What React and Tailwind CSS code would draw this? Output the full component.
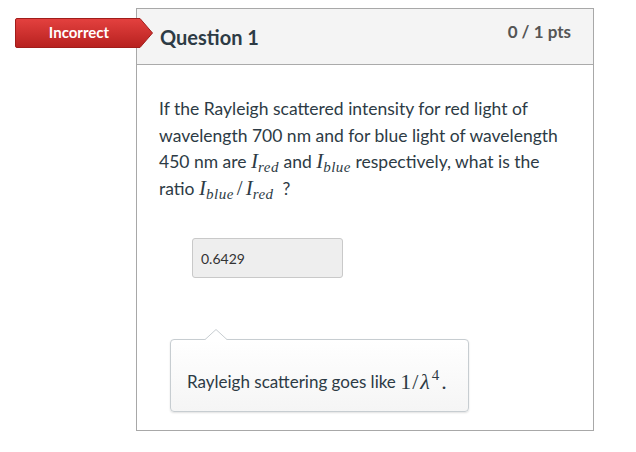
import React from "react";

const mathFont = { fontFamily: '"Liberation Serif", serif' };

function MathI({ sub }) {
  return (
    <span className="whitespace-nowrap leading-none">
      <span className="italic text-[21px] leading-none" style={mathFont}>I</span>
      <span className="italic text-[15px] leading-none relative top-[4px] tracking-[0.5px]" style={mathFont}>{sub}</span>
    </span>
  );
}

export default function App() {
  return (
    <div className="w-[636px] h-[452px] bg-white relative" style={{ fontFamily: 'Lato, "Noto Sans", sans-serif' }}>
      <div className="pl-[136px] pt-[8px]">
        <div className="w-[458px] h-[423px] border border-[#a8a8a8] flex flex-col">
          <div className="h-[56px] bg-[#f4f4f4] border-b border-[#aaaaaa] flex items-center justify-between pl-[23px] pr-[22px]">
            <span className="text-[20px] font-bold text-[#2d3b45]">Question 1</span>
            <span className="text-[17px] font-bold text-[#555555] -mt-[9px]">0 / 1 pts</span>
          </div>
          <div className="pl-[22px] pt-[31px]">
            <p className="w-[412px] text-[17.5px] leading-[26.5px] text-[#2d3b45]">
              If the Rayleigh scattered intensity for red light of wavelength 700 nm and for blue light of wavelength 450 nm are <MathI sub="red" /> and <MathI sub="blue" /> respectively, what is the ratio <MathI sub="blue" /><span className="text-[21px] leading-none mx-[3px]" style={mathFont}>/</span><MathI sub="red" />&nbsp;&nbsp;?
            </p>
            <div className="ml-[33px] mt-[36px] w-[151px] h-[40px] bg-[#eeeeee] border border-[#c9c9c9] rounded-[3px] flex items-center pl-[8px] text-[14px] text-[#333333]">
              0.6429
            </div>
            <div className="relative ml-[11px] mt-[61px] w-[299px] h-[73px] rounded-[4px] border border-[#c7cdd1] bg-gradient-to-b from-white to-[#f5f5f5] shadow-[0_1px_2px_rgba(0,0,0,0.12)] flex items-center pl-[16px] pt-[13px] text-[17px] text-[#2d3b45]">
              <svg className="absolute left-[33px] -top-[11px]" width="24" height="12" viewBox="0 0 24 12">
                <path d="M0 11.5 L12 0.5 L24 11.5" fill="white" stroke="#c7cdd1" strokeWidth="1" />
                <rect x="0" y="11" width="24" height="2" fill="white" />
              </svg>
              <span>Rayleigh scattering goes like&nbsp;</span>
              <span className="text-[22px] leading-none tracking-[1px]" style={mathFont}>1/<span className="italic ml-[1px]">λ</span><span className="text-[15px] relative -top-[9px] ml-[1px]">4</span><span className="ml-[1px]">.</span></span>
            </div>
          </div>
        </div>
      </div>
      <div className="absolute left-[15px] top-[18px] h-[30px] w-[138px]">
        <svg className="absolute inset-0" width="138" height="30" viewBox="0 0 138 30">
          <defs>
            <linearGradient id="rg" x1="0" y1="0" x2="0" y2="1">
              <stop offset="0" stopColor="#e4413f" />
              <stop offset="1" stopColor="#b7211f" />
            </linearGradient>
          </defs>
          <path d="M2 0.5 H125 L137.5 15 L125 29.5 H2 Q0.5 29.5 0.5 28 V2 Q0.5 0.5 2 0.5 Z" fill="url(#rg)" stroke="#a11d1b" strokeWidth="1" />
        </svg>
        <div className="relative w-[128px] h-[29px] flex items-center justify-center text-white font-bold text-[15px]">Incorrect</div>
      </div>
    </div>
  );
}
